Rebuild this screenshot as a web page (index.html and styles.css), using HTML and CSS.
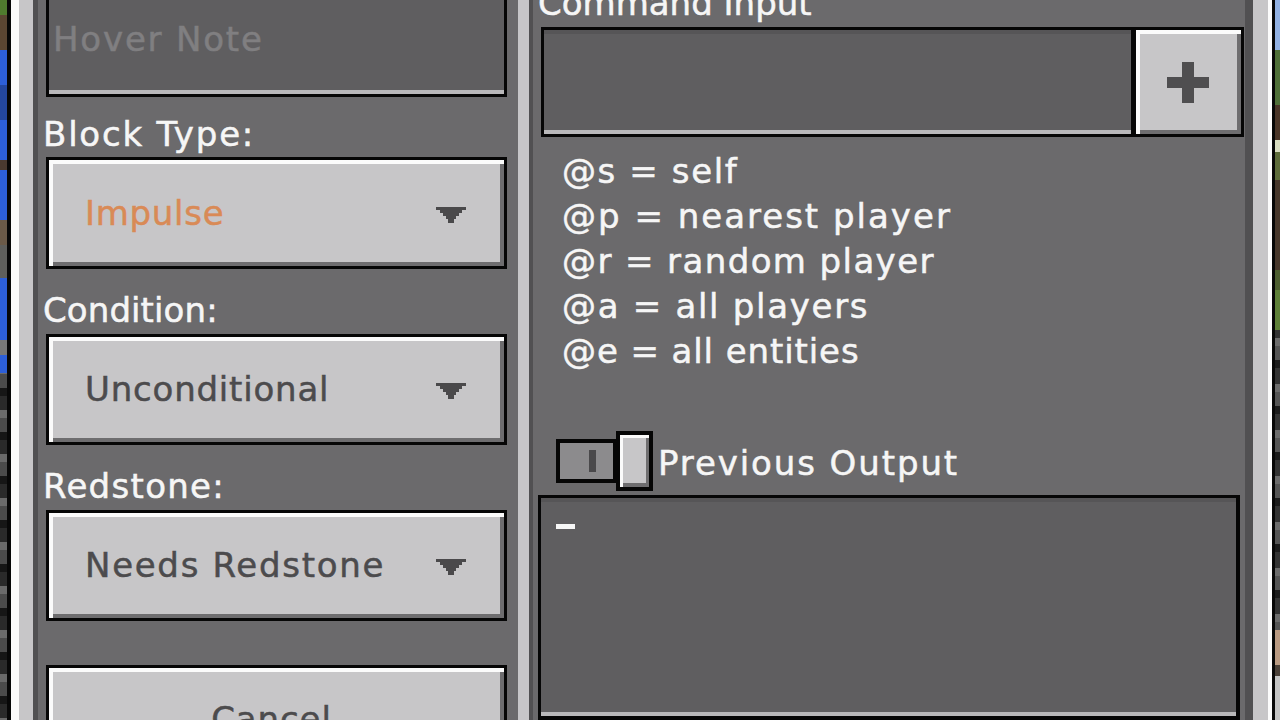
FILE: index.html
```html
<!DOCTYPE html>
<html lang="en">
<head>
<meta charset="utf-8">
<title>Command Block</title>
<link rel="stylesheet" href="styles.css">
</head>
<body>
<div class="screen">
  <div class="world world-left"></div>
  <div class="frame"><div class="bevel"><div class="rim"><div class="edge">
    <div class="content">
      <section class="col-left">
        <div class="field field-note"><span class="placeholder ls-18">Hover Note</span></div>
        <div class="label label-first ls-18">Block Type:</div>
        <div class="btn select select-tall"><span class="orange ls-07">Impulse</span>
          <svg class="arrow" viewBox="0 0 30 16"><path d="M0 0H30V3H26V6H23V9H20V12H18V16H12V12H10V9H7V6H4V3H0Z"/></svg></div>
        <div class="label ls-01">Condition:</div>
        <div class="btn select"><span class="ls-08">Unconditional</span>
          <svg class="arrow" viewBox="0 0 30 16"><path d="M0 0H30V3H26V6H23V9H20V12H18V16H12V12H10V9H7V6H4V3H0Z"/></svg></div>
        <div class="label ls-13">Redstone:</div>
        <div class="btn select"><span class="ls-17">Needs Redstone</span>
          <svg class="arrow" viewBox="0 0 30 16"><path d="M0 0H30V3H26V6H23V9H20V12H18V16H12V12H10V9H7V6H4V3H0Z"/></svg></div>
        <div class="btn cancel"><span class="ls-09">Cancel</span></div>
      </section>
      <div class="divider"></div>
      <section class="col-right">
        <div class="label-cmd ls-00">Command Input</div>
        <div class="input-row">
          <div class="field field-cmd"></div>
          <div class="btn plus"><svg class="plus-icon" viewBox="0 0 42 41"><path d="M15 0H27V15H42V26H27V41H15V26H0V15H15Z"/></svg></div>
        </div>
        <ul class="selectors">
          <li class="ls-16">@s = self</li>
          <li class="ls-20">@p = nearest player</li>
          <li class="ls-14">@r = random player</li>
          <li class="ls-17">@a = all players</li>
          <li class="ls-09">@e = all entities</li>
        </ul>
        <div class="toggle-row">
          <div class="track"><i class="tick"></i></div>
          <div class="thumb"></div>
          <span class="toggle-label ls-19">Previous Output</span>
        </div>
        <div class="field field-output"><i class="cursor"></i></div>
      </section>
    </div>
  </div></div></div></div>
  <div class="world world-right"></div>
</div>
</body>
</html>
```
FILE: styles.css
```css
* { box-sizing: border-box; }
html, body { margin: 0; height: 100%; overflow: hidden; background: #000; }
body { font: 34px/44px "DejaVu Sans", sans-serif; color: #f6f6f6; -webkit-text-stroke: 0.5px currentColor; }
.screen { display: flex; width: 1280px; height: 720px; overflow: hidden; }

.ls-00 { letter-spacing: 0; }
.ls-01 { letter-spacing: 0.1px; }
.ls-07 { letter-spacing: 0.7px; }
.ls-08 { letter-spacing: 0.8px; }
.ls-09 { letter-spacing: 0.9px; }
.ls-13 { letter-spacing: 1.3px; }
.ls-14 { letter-spacing: 1.4px; }
.ls-16 { letter-spacing: 1.6px; }
.ls-17 { letter-spacing: 1.7px; }
.ls-18 { letter-spacing: 1.8px; }
.ls-19 { letter-spacing: 1.9px; }
.ls-20 { letter-spacing: 2px; }

.world { flex: none; height: 720px; }
.world-left {
  width: 7px;
  background:
    linear-gradient(to bottom,
      #4f7b2e 0 15px, #5b4632 15px 50px, #2d5fd8 50px 85px, #24479f 85px 120px, #2d5fd8 120px 160px,
      #4a3a30 160px 170px, #2d5fd8 170px 220px, #6b5a48 220px 245px, #5f5f5c 245px 278px,
      #2d5fd8 278px 340px, #777 340px 355px, #2d5fd8 355px 373px, transparent 373px),
    repeating-linear-gradient(to bottom, #2a2a2a 0 14px, #6a6a6a 14px 22px, #4b4b4b 22px 36px, #161616 36px 44px);
}
.world-right {
  width: 5px;
  background:
    linear-gradient(to bottom,
      #93b2e4 0 50px, #4f6f38 50px 105px, #4a3528 105px 140px, #d8dcc0 140px 152px, #5d6b3a 152px 180px,
      #47372b 180px 270px, #4c5d2f 270px 290px, #5e8038 290px 330px, transparent 330px,
      transparent 630px, #b99a82 630px 665px, #4a4038 665px 676px, #c4c4c4 676px),
    repeating-linear-gradient(to bottom, #333 0 16px, #6c6c6c 16px 24px, #555 24px 38px, #1b1b1b 38px 46px);
}

.frame { flex: 1; min-width: 0; border: solid #070707; border-width: 0 3px 0 4px; }
.bevel { height: 100%; border: solid #fbfbfb; border-width: 0 4px 0 8px; }
.rim { height: 100%; border: solid #c7c6c8; border-width: 0 15px 0 14px; }
.edge { height: 100%; border: solid #515052; border-width: 0 8px 0 5px; }
.content { display: flex; height: 100%; background: #6b6a6c; }

.col-left { flex: none; width: 480px; padding: 0 11px 0 8px; display: flex; flex-direction: column; }
.divider { flex: none; width: 15px; background: #c7c6c8; border-right: 4px solid #515052; }
.col-right { flex: 1; min-width: 0; padding: 0 1px 0 8px; display: flex; flex-direction: column; }

.field { background: #5f5e60; border: solid #060606; border-width: 0 3px 3px; box-shadow: inset 0 -4px 0 #b9b8ba; }
.field-note { flex: none; height: 97px; padding: 17px 5px 0 4px; }
.placeholder { color: #807f81; -webkit-text-stroke: 0.5px #807f81; }

.label { flex: none; height: 46px; margin: 19px 0 0 -3px; white-space: nowrap; }
.label-first { height: 45px; margin-top: 15px; }

.btn { background: #c7c6c8; border: 3px solid #060606; color: #4c4b4d; box-shadow: inset 4px 4px 0 #fbfbfb, inset -4px -4px 0 #6e6d6f; }
.select { flex: none; height: 111px; display: flex; align-items: center; justify-content: space-between; padding: 0 38px 2px 36px; }
.select-tall { height: 112px; padding-bottom: 0; }
.select > .arrow { margin-top: 4px; }
.orange { color: #d98a56; }
.arrow { width: 30px; height: 16px; fill: #4a494b; }
.cancel { flex: none; height: 112px; margin-top: 44px; display: flex; align-items: center; justify-content: center; padding: 0 10px 4px 0; }

.label-cmd { flex: none; height: 46px; margin: -19px 0 0 -3px; white-space: nowrap; }
.input-row { flex: none; display: flex; height: 110px; }
.field-cmd { flex: 1; border-top-width: 3px; border-right-width: 5px; box-shadow: inset 0 -4px 0 #b9b8ba, inset 0 4px 0 #565557; }
.plus { flex: none; width: 108px; border-left: 0; display: flex; align-items: center; justify-content: center; padding-right: 2px; }
.plus-icon { width: 42px; height: 41px; fill: #4f4e50; }

.selectors { flex: none; margin: 12px 0 0 21px; padding: 0; list-style: none; line-height: 45px; }

.toggle-row { flex: none; display: flex; align-items: center; height: 60px; margin: 57px 0 0 15px; }
.track { width: 61px; height: 44px; background: #8c8b8d; border: 4px solid #060606; display: flex; justify-content: flex-end; align-items: center; padding-right: 17px; }
.tick { width: 7px; height: 22px; background: #4a494b; }
.thumb { width: 37px; height: 60px; margin-left: -1px; background: #c7c6c8; border: 4px solid #060606; box-shadow: inset 3px 3px 0 #fbfbfb, inset 0 -4px 0 #6e6d6f, inset -3px 0 0 #6e6d6f; }
.toggle-label { margin-left: 5px; padding-top: 4px; white-space: nowrap; }

.field-output { flex: none; height: 225px; margin: 4px 4px 0 -3px; padding: 26px 0 0 15px; border-top-width: 3px; border-right-width: 4px; border-bottom-width: 4px; box-shadow: inset 0 -4px 0 #b9b8ba, inset 0 4px 0 #565557; }
.cursor { display: block; width: 19px; height: 5px; background: #f6f6f6; }
```
